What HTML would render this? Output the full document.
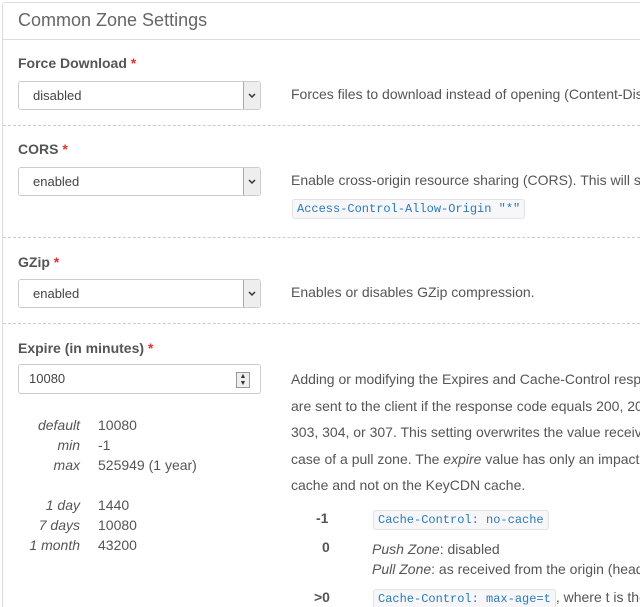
<!DOCTYPE html>
<html><head><style>
html,body{margin:0;padding:0;overflow:hidden}
body{width:640px;height:607px;background:#fff;font-family:"Liberation Sans",sans-serif;color:#555;font-size:14px}
#w{position:relative;width:640px;height:607px;overflow:hidden}
.a{position:absolute;white-space:nowrap}
.panel{position:absolute;left:2px;top:2px;width:638px;height:605px;border:1px solid #ddd;border-right:none;border-bottom:none;border-radius:3px 0 0 0;box-sizing:border-box}
.hd{position:absolute;left:3px;top:39px;width:637px;border-top:1px solid #ddd}
.dash{position:absolute;left:3px;width:637px;border-top:1px dashed #ccc}
.lbl{font-weight:bold;font-size:14px;color:#555}
.lbl b{color:#e4312b}
.sel{position:absolute;left:18px;width:241px;height:27px;border:1px solid #ccc;border-radius:3px;background:#fff;font-size:13px;color:#444}
.sel span{position:absolute;left:14px;top:6px}
.sel i{position:absolute;right:0;top:0;width:16px;height:27px;border-left:1px solid #aaa;background:#eee;border-radius:0 3px 3px 0}
.sel i svg{position:absolute;left:4px;top:11px}
code{font-family:"Liberation Mono",monospace;font-size:12px;color:#2a7ab8;background:#f7f7f9;border:1px solid #e1e1e8;border-radius:3px;padding:2px 4px}
</style></head><body><div id="w">
<div class="panel"></div>
<div class="a" style="left:18px;top:10px;font-size:18px;color:#666">Common Zone Settings</div>
<div class="hd"></div>

<div class="a lbl" style="left:18px;top:55px">Force Download <b>*</b></div>
<div class="sel" style="top:81px"><span>disabled</span><i><svg width="8" height="6"><path d="M1 1L4 4L7 1" stroke="#333" stroke-width="1.5" fill="none"/></svg></i></div>
<div class="a" style="left:291px;top:86px">Forces files to download instead of opening (Content-Disposition)</div>
<div class="dash" style="top:125px"></div>

<div class="a lbl" style="left:18px;top:141px">CORS <b>*</b></div>
<div class="sel" style="top:167px"><span>enabled</span><i><svg width="8" height="6"><path d="M1 1L4 4L7 1" stroke="#333" stroke-width="1.5" fill="none"/></svg></i></div>
<div class="a" style="left:291px;top:172px">Enable cross-origin resource sharing (CORS). This will set</div>
<div class="a" style="left:292px;top:199px"><code>Access-Control-Allow-Origin "*"</code></div>
<div class="dash" style="top:237px"></div>

<div class="a lbl" style="left:18px;top:254px">GZip <b>*</b></div>
<div class="sel" style="top:279px"><span>enabled</span><i><svg width="8" height="6"><path d="M1 1L4 4L7 1" stroke="#333" stroke-width="1.5" fill="none"/></svg></i></div>
<div class="a" style="left:291px;top:284px">Enables or disables GZip compression.</div>
<div class="dash" style="top:323px"></div>

<div class="a lbl" style="left:18px;top:340px">Expire (in minutes) <b>*</b></div>
<div class="sel" style="top:364px;height:28px"><span style="left:10px">10080</span><div style="position:absolute;border:1px solid #999;top:7px;right:10px;width:12px;height:14px;line-height:7px;font-size:7px;text-align:center;background:#eee;color:#333">&#9650;<br>&#9660;</div></div>
<div class="a" style="left:0;top:415px;width:80px;text-align:right;font-style:italic;line-height:20px">default<br>min<br>max<br><br>1 day<br>7 days<br>1 month</div>
<div class="a" style="left:98px;top:415px;line-height:20px">10080<br>-1<br>525949 (1 year)<br><br>1440<br>10080<br>43200</div>

<div class="a" style="left:291px;top:366px;line-height:26.5px">Adding or modifying the Expires and Cache-Control response headers<br>are sent to the client if the response code equals 200, 201, 204, 206, 301, 302,<br>303, 304, or 307. This setting overwrites the value received from the origin in<br>case of a pull zone. The <i>expire</i> value has only an impact on the browser<br>cache and not on the KeyCDN cache.</div>

<div class="a" style="left:316px;top:510px;font-weight:bold">-1</div>
<div class="a" style="left:373px;top:510px"><code>Cache-Control: no-cache</code></div>
<div class="a" style="left:322px;top:539px;font-weight:bold">0</div>
<div class="a" style="left:372px;top:539px;line-height:20px"><i>Push Zone</i>: disabled<br><i>Pull Zone</i>: as received from the origin (header honoring)</div>
<div class="a" style="left:314px;top:589px;font-weight:bold">&gt;0</div>
<div class="a" style="left:373px;top:589px"><code>Cache-Control: max-age=t</code>, where t is the time</div>
</div></body></html>
